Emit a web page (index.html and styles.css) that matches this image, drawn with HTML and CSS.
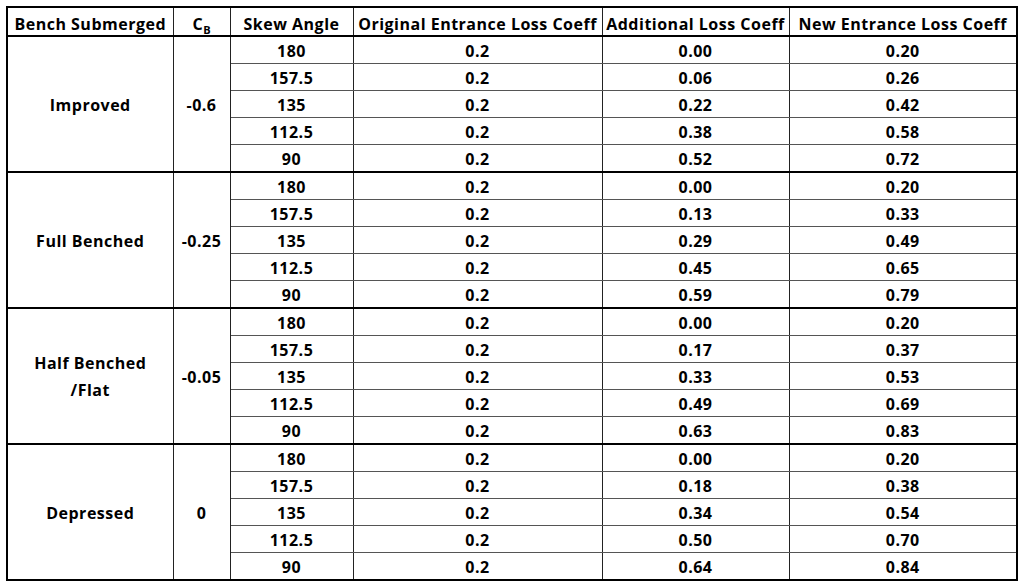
FILE: index.html
```html
<!DOCTYPE html>
<html>
<head>
<meta charset="utf-8">
<link rel="stylesheet" href="styles.css">
</head>
<body>
<div class="page">
<table class="loss">
<colgroup>
<col class="c1"><col class="c2"><col class="c3"><col class="c4"><col class="c5"><col class="c6">
</colgroup>
<thead>
<tr><th>Bench Submerged</th><th>C<sub>B</sub></th><th>Skew Angle</th><th>Original Entrance Loss Coeff</th><th>Additional Loss Coeff</th><th>New Entrance Loss Coeff</th></tr>
</thead>
<tbody class="grp">
<tr><td rowspan="5">Improved</td><td rowspan="5">-0.6</td><td>180</td><td>0.2</td><td>0.00</td><td>0.20</td></tr>
<tr><td>157.5</td><td>0.2</td><td>0.06</td><td>0.26</td></tr>
<tr><td>135</td><td>0.2</td><td>0.22</td><td>0.42</td></tr>
<tr><td>112.5</td><td>0.2</td><td>0.38</td><td>0.58</td></tr>
<tr><td>90</td><td>0.2</td><td>0.52</td><td>0.72</td></tr>
</tbody>
<tbody class="grp">
<tr><td rowspan="5">Full Benched</td><td rowspan="5">-0.25</td><td>180</td><td>0.2</td><td>0.00</td><td>0.20</td></tr>
<tr><td>157.5</td><td>0.2</td><td>0.13</td><td>0.33</td></tr>
<tr><td>135</td><td>0.2</td><td>0.29</td><td>0.49</td></tr>
<tr><td>112.5</td><td>0.2</td><td>0.45</td><td>0.65</td></tr>
<tr><td>90</td><td>0.2</td><td>0.59</td><td>0.79</td></tr>
</tbody>
<tbody class="grp">
<tr><td rowspan="5" class="two">Half Benched<br>/Flat</td><td rowspan="5">-0.05</td><td>180</td><td>0.2</td><td>0.00</td><td>0.20</td></tr>
<tr><td>157.5</td><td>0.2</td><td>0.17</td><td>0.37</td></tr>
<tr><td>135</td><td>0.2</td><td>0.33</td><td>0.53</td></tr>
<tr><td>112.5</td><td>0.2</td><td>0.49</td><td>0.69</td></tr>
<tr><td>90</td><td>0.2</td><td>0.63</td><td>0.83</td></tr>
</tbody>
<tbody class="grp">
<tr><td rowspan="5">Depressed</td><td rowspan="5">0</td><td>180</td><td>0.2</td><td>0.00</td><td>0.20</td></tr>
<tr><td>157.5</td><td>0.2</td><td>0.18</td><td>0.38</td></tr>
<tr><td>135</td><td>0.2</td><td>0.34</td><td>0.54</td></tr>
<tr><td>112.5</td><td>0.2</td><td>0.50</td><td>0.70</td></tr>
<tr><td>90</td><td>0.2</td><td>0.64</td><td>0.84</td></tr>
</tbody>
</table>
</div>
</body>
</html>
```
FILE: styles.css
```css
html, body {
  margin: 0;
  padding: 0;
  background: #fff;
}
.page {
  padding: 6px 0 0 6px;
}
.loss {
  border-collapse: collapse;
  table-layout: fixed;
  width: 1010px;
  border: 2px solid #000;
  font-family: "Open Sans", "Liberation Sans", sans-serif;
  font-weight: 700;
  font-size: 16px;
  letter-spacing: 0.5px;
  color: #000;
}
.c1 { width: 166px; }
.c2 { width: 57px; }
.c3 { width: 123px; }
.c4 { width: 249px; }
.c5 { width: 187px; }
.c6 { width: 228px; }
.loss th, .loss td {
  border: 1px solid #222;
  border-top-color: #555;
  border-bottom-color: #555;
  text-align: center;
  vertical-align: middle;
  padding: 2px 0 0;
  white-space: nowrap;
  overflow: hidden;
  line-height: 20px;
}
.loss th {
  height: 23px;
  padding-top: 4px;
  font-weight: 700;
  border-bottom: 2px solid #000;
}
.loss td {
  height: 24px;
}
.loss td.two {
  line-height: 27px;
}
.grp {
  border-bottom: 2px solid #000;
}
.loss sub {
  font-size: 11px;
  vertical-align: -4px;
  line-height: 0;
  letter-spacing: 0;
}
```
